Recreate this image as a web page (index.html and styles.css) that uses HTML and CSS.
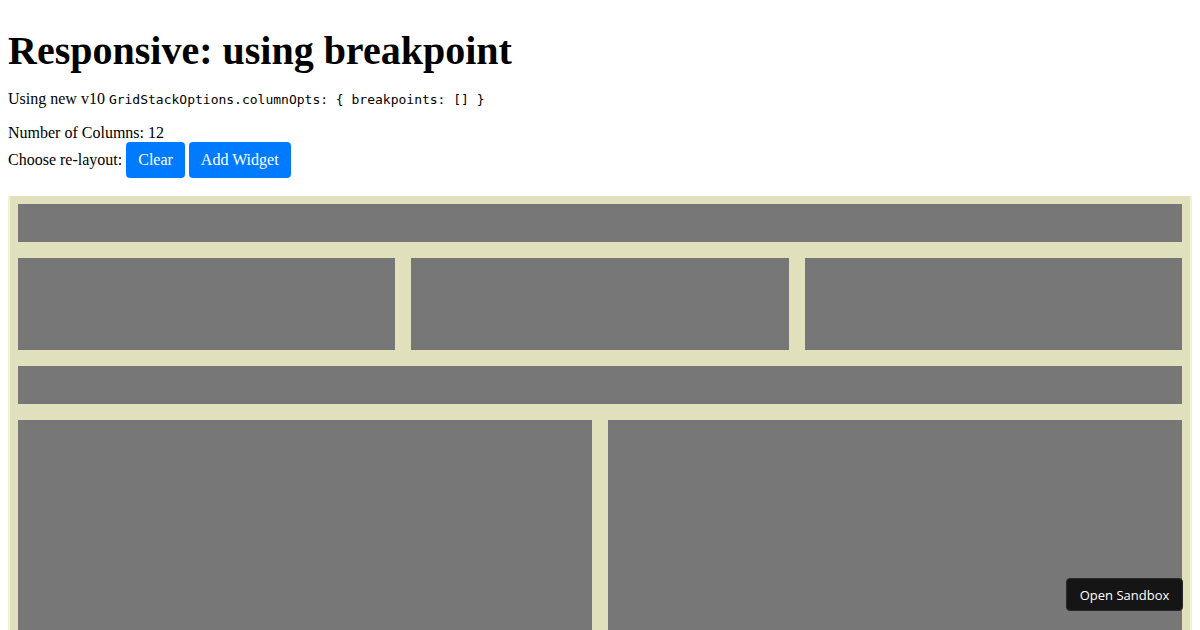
FILE: index.html
```html
<!DOCTYPE html>
<html>
<head>
<meta charset="utf-8">
<link rel="stylesheet" href="styles.css">
</head>
<body>
<h1 class="title">Responsive: using breakpoint</h1>
<p class="intro">Using new v10 <code class="code">GridStackOptions.columnOpts: { breakpoints: [] }</code></p>
<div class="info">Number of Columns: <span>12</span></div>
<div class="controls">Choose re-layout: <button class="btn">Clear</button> <button class="btn">Add Widget</button></div>
<div class="grid">
  <div class="item span-12 rows-1"></div>
  <div class="item span-4 rows-2"></div>
  <div class="item span-4 rows-2"></div>
  <div class="item span-4 rows-2"></div>
  <div class="item span-12 rows-1"></div>
  <div class="item span-6 rows-6"></div>
  <div class="item span-6 rows-6"></div>
</div>
<button class="sandbox">Open Sandbox</button>
</body>
</html>
```
FILE: styles.css
```css
html { overflow: hidden; }
body {
  margin: 8px;
  font-family: "Liberation Serif", "Times New Roman", serif;
  font-size: 16px;
  color: #000;
  background: #fff;
}
.title {
  font-size: 40px;
  font-weight: bold;
  margin: 19px 0 16px;
}
.intro { margin: 16px 0; }
.code {
  font-family: "DejaVu Sans Mono", monospace;
  font-size: 13px;
}
.controls { margin-bottom: 18px; }
.btn {
  font-family: "Liberation Serif", "Times New Roman", serif;
  font-size: 16px;
  line-height: 24px;
  padding: 6px 12px;
  border: 0;
  border-radius: 4px;
  background: #007bff;
  color: #fff;
  cursor: pointer;
}
.grid {
  background: #e0e0bd;
  border-left: 2px solid #f3f3d3;
  border-right: 2px solid #f3f3d3;
  padding: 8px;
  display: grid;
  grid-template-columns: repeat(12, 1fr);
  grid-auto-rows: 38px;
  gap: 16px;
}
.item { background: #777777; }
.span-12 { grid-column: span 12; }
.span-6 { grid-column: span 6; }
.span-4 { grid-column: span 4; }
.rows-1 { grid-row: span 1; }
.rows-2 { grid-row: span 2; }
.rows-6 { grid-row: span 6; }
.sandbox {
  position: fixed;
  right: 17px;
  bottom: 19px;
  width: 117px;
  height: 33px;
  background: #151515;
  color: #fff;
  border: 1px solid #2a2a2a;
  border-radius: 4px;
  font-family: "Open Sans", "Noto Sans", sans-serif;
  font-size: 13px;
  font-weight: 500;
  padding: 0;
}
```
